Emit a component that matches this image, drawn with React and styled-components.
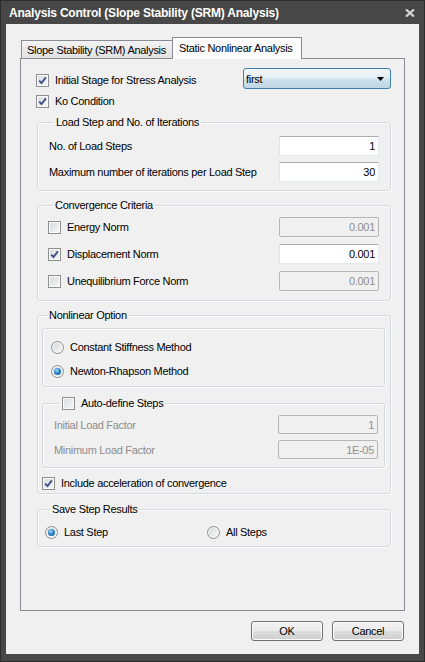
import React from 'react';
import styled, { createGlobalStyle } from 'styled-components';

const GlobalStyle = createGlobalStyle`
  html, body {
    margin: 0;
    padding: 0;
    background: #454545;
  }
  body {
    font-family: "Liberation Sans", Arial, sans-serif;
    font-size: 11px;
    letter-spacing: -0.3px;
    color: #000;
  }
`;

const Window = styled.div`
  width: 425px;
  height: 662px;
  box-sizing: border-box;
  display: flex;
  flex-direction: column;
  background: #474747;
  border: 1px solid #2c2c2c;
  padding: 0 5px 7px;
`;

const TitleBar = styled.div`
  height: 23px;
  display: flex;
  align-items: center;
  padding-left: 3px;
  color: #fff;
  font-size: 12px;
  font-weight: bold;
  letter-spacing: -0.2px;
`;

const CloseGlyph = styled.span`
  margin-left: auto;
  margin-right: 4px;
  display: flex;
`;

const Client = styled.div`
  flex: 1;
  background: #f0f0f0;
  display: flex;
  flex-direction: column;
  padding: 13px 14px 0;
  box-sizing: border-box;
`;

const TabStrip = styled.div`
  display: flex;
  align-items: flex-end;
  height: 21px;
  padding-left: 1px;
`;

const Tab = styled.div`
  box-sizing: border-box;
  display: flex;
  align-items: center;
  border: 1px solid #898c95;
  border-bottom: none;
  width: ${p => p.$width}px;
  height: ${p => (p.$active ? 22 : 18)}px;
  padding-left: ${p => (p.$active ? 6 : 5)}px;
  padding-bottom: ${p => (p.$active ? 1 : 0)}px;
  margin-bottom: ${p => (p.$active ? -1 : 0)}px;
  border-right: ${p => (p.$active ? '1px solid #898c95' : 'none')};
  background: ${p => (p.$active ? '#fcfcfc' : 'linear-gradient(#f3f3f3, #e2e2e2)')};
  position: relative;
  z-index: ${p => (p.$active ? 1 : 0)};
`;

const Panel = styled.div`
  height: 553px;
  box-sizing: border-box;
  border: 1px solid #898c95;
  background: #f0f0f0;
  padding: 9px 13px 0 15px;
  display: flex;
  flex-direction: column;
`;

const TopRow = styled.div`
  display: flex;
  align-items: flex-start;
`;

const CheckLabel = styled.label`
  display: flex;
  align-items: center;
  gap: 6px;
  height: ${p => p.$h || 13}px;
  margin-top: ${p => p.$mt || 0}px;
  color: ${p => (p.$disabled ? '#8d8d8d' : '#000')};
  line-height: 13px;
  white-space: nowrap;
`;

const CheckBox = styled.span`
  width: 13px;
  height: 13px;
  box-sizing: border-box;
  flex: none;
  display: inline-flex;
  align-items: center;
  justify-content: center;
  border: 1px solid #8e8f8f;
  background: linear-gradient(135deg, #d6dadf, #f7f7f7);
  box-shadow: inset 0 0 0 1px #fbfbfb;
`;

const RadioDot = styled.span`
  width: 13px;
  height: 13px;
  box-sizing: border-box;
  flex: none;
  display: inline-flex;
  align-items: center;
  justify-content: center;
  border-radius: 50%;
  border: 1px solid #8e8f8f;
  background: linear-gradient(135deg, #d4d6d9, #fafafa);
  box-shadow: inset 0 0 0 1px #f6f6f6;

  &::after {
    content: '';
    display: ${p => (p.$checked ? 'block' : 'none')};
    width: 7px;
    height: 7px;
    border-radius: 50%;
    background: radial-gradient(circle at 40% 35%, #a8e0ff 0, #2b86c9 45%, #0b4f8c 100%);
  }
`;

const Dropdown = styled.div`
  margin-left: auto;
  width: 148px;
  height: 21px;
  box-sizing: border-box;
  border: 1px solid #3c7fb1;
  border-radius: 3px;
  background: linear-gradient(#f2f6f9 0%, #e6eff5 45%, #cfe1ec 55%, #c0d6e4 100%);
  display: flex;
  align-items: center;
  padding: 0 6px 0 2px;
`;

const Group = styled.fieldset`
  margin: ${p => p.$mt || 0}px 0 0 ${p => p.$ml ?? 1}px;
  padding: ${p => p.$pad};
  border: 1px solid #d5d9dd;
  border-radius: 3px;
  box-shadow: inset 1px 1px 0 #fbfbfb, 1px 1px 0 #fbfbfb;
  min-width: 0;
`;

const Legend = styled.legend`
  margin-left: ${p => p.$ml ?? 5}px;
  padding: 0 2px;
  line-height: 13px;
  display: flex;
  align-items: center;
`;

const InnerBox = styled.div`
  border: 1px solid #d5d9dd;
  border-radius: 3px;
  box-shadow: inset 1px 1px 0 #fbfbfb, 1px 1px 0 #fbfbfb;
  padding: 10px 0 7px 8px;
`;

const Stack = styled.div`
  display: flex;
  flex-direction: column;
  gap: ${p => p.$gap}px;
`;

const FieldRow = styled.div`
  display: flex;
  align-items: center;
  justify-content: space-between;
  height: ${p => p.$h || 20}px;
  color: ${p => (p.$disabled ? '#8d8d8d' : '#000')};
`;

const NumInput = styled.input`
  width: 100px;
  height: ${p => p.$h || 20}px;
  box-sizing: border-box;
  margin: 0;
  padding: 0 3px 0 0;
  text-align: right;
  font: inherit;
  letter-spacing: inherit;
  outline: none;
  color: ${p => (p.disabled ? '#8f8f8f' : '#000')};
  background: ${p => (p.disabled ? '#f0f0f0' : '#fff')};
  border: 1px solid;
  border-color: ${p => (p.disabled ? '#b5b5b5' : '#abadb3 #e3e9ef #e3e9ef #e2e3ea')};
  border-radius: ${p => (p.disabled ? 2 : 0)}px;
`;

const RadioGrid = styled.div`
  display: grid;
  grid-template-columns: 162px 1fr;
  height: 16px;
`;

const ButtonRow = styled.div`
  display: flex;
  justify-content: flex-end;
  gap: 9px;
  margin-top: 10px;
  padding-right: 1px;
`;

const Button = styled.button`
  width: 72px;
  height: 20px;
  box-sizing: border-box;
  font: inherit;
  letter-spacing: inherit;
  color: #000;
  border: 1px solid #707070;
  border-radius: 3px;
  background: linear-gradient(#f2f2f2 0%, #ebebeb 48%, #dddddd 52%, #cfcfcf 100%);
  box-shadow: inset 0 0 0 1px #fcfcfc;
  padding: 0;
`;

const Check = ({ checked, children, ...rest }) => (
  <CheckLabel {...rest}>
    <CheckBox>
      {checked && (
        <svg width="9" height="9" viewBox="0 0 9 9">
          <path d="M1.2 4.6 L3.5 7 L7.9 1.4" fill="none" stroke="#3f5288" strokeWidth="1.9" />
        </svg>
      )}
    </CheckBox>
    {children}
  </CheckLabel>
);

const Radio = ({ checked, children }) => (
  <CheckLabel $h={16}>
    <RadioDot $checked={checked} />
    {children}
  </CheckLabel>
);

export default function App() {
  return (
    <>
      <GlobalStyle />
      <Window>
        <TitleBar>
          Analysis Control (Slope Stability (SRM) Analysis)
          <CloseGlyph>
            <svg width="10" height="8" viewBox="0 0 10 8">
              <path d="M1 0.5 L9 7.5 M9 0.5 L1 7.5" stroke="#d6d6d6" strokeWidth="2.2" />
            </svg>
          </CloseGlyph>
        </TitleBar>
        <Client>
          <TabStrip>
            <Tab $width={151}>Slope Stability (SRM) Analysis</Tab>
            <Tab $width={130} $active>Static Nonlinear Analysis</Tab>
          </TabStrip>
          <Panel>
            <TopRow>
              <Check checked $mt={6}>Initial Stage for Stress Analysis</Check>
              <Dropdown>
                <span>first</span>
                <svg width="7" height="4" viewBox="0 0 7 4" style={{ marginLeft: 'auto' }}>
                  <path d="M0 0 H7 L3.5 4 Z" fill="#000" />
                </svg>
              </Dropdown>
            </TopRow>
            <Check checked $mt={6}>Ko Condition</Check>

            <Group $mt={8} $pad="7px 11px 8px 11px">
              <Legend>Load Step and No. of Iterations</Legend>
              <Stack $gap={6}>
                <FieldRow>
                  No. of Load Steps
                  <NumInput defaultValue="1" readOnly />
                </FieldRow>
                <FieldRow>
                  Maximum number of iterations per Load Step
                  <NumInput defaultValue="30" readOnly />
                </FieldRow>
              </Stack>
            </Group>

            <Group $mt={8} $pad="5px 11px 9px 10px">
              <Legend>Convergence Criteria</Legend>
              <Stack $gap={7}>
                <FieldRow>
                  <Check>Energy Norm</Check>
                  <NumInput defaultValue="0.001" disabled />
                </FieldRow>
                <FieldRow>
                  <Check checked>Displacement Norm</Check>
                  <NumInput defaultValue="0.001" readOnly />
                </FieldRow>
                <FieldRow>
                  <Check>Unequilibrium Force Norm</Check>
                  <NumInput defaultValue="0.001" disabled />
                </FieldRow>
              </Stack>
            </Group>

            <Group $mt={8} $pad="6px 5px 2px 4px">
              <Legend>Nonlinear Option</Legend>
              <InnerBox>
                <Stack $gap={8}>
                  <Radio>Constant Stiffness Method</Radio>
                  <Radio checked>Newton-Rhapson Method</Radio>
                </Stack>
              </InnerBox>
              <Group $mt={10} $ml={0} $pad="5px 6px 8px 11px">
                <Legend $ml={6}>
                  <Check>Auto-define Steps</Check>
                </Legend>
                <Stack $gap={6}>
                  <FieldRow $h={19} $disabled>
                    Initial Load Factor
                    <NumInput $h={19} defaultValue="1" disabled />
                  </FieldRow>
                  <FieldRow $h={19} $disabled>
                    Minimum Load Factor
                    <NumInput $h={19} defaultValue="1E-05" disabled />
                  </FieldRow>
                </Stack>
              </Group>
              <Check checked $h={16} $mt={7}>Include acceleration of convergence</Check>
            </Group>

            <Group $mt={9} $pad="8px 0 6px 7px">
              <Legend>Save Step Results</Legend>
              <RadioGrid>
                <Radio checked>Last Step</Radio>
                <Radio>All Steps</Radio>
              </RadioGrid>
            </Group>
          </Panel>
          <ButtonRow>
            <Button>OK</Button>
            <Button>Cancel</Button>
          </ButtonRow>
        </Client>
      </Window>
    </>
  );
}
